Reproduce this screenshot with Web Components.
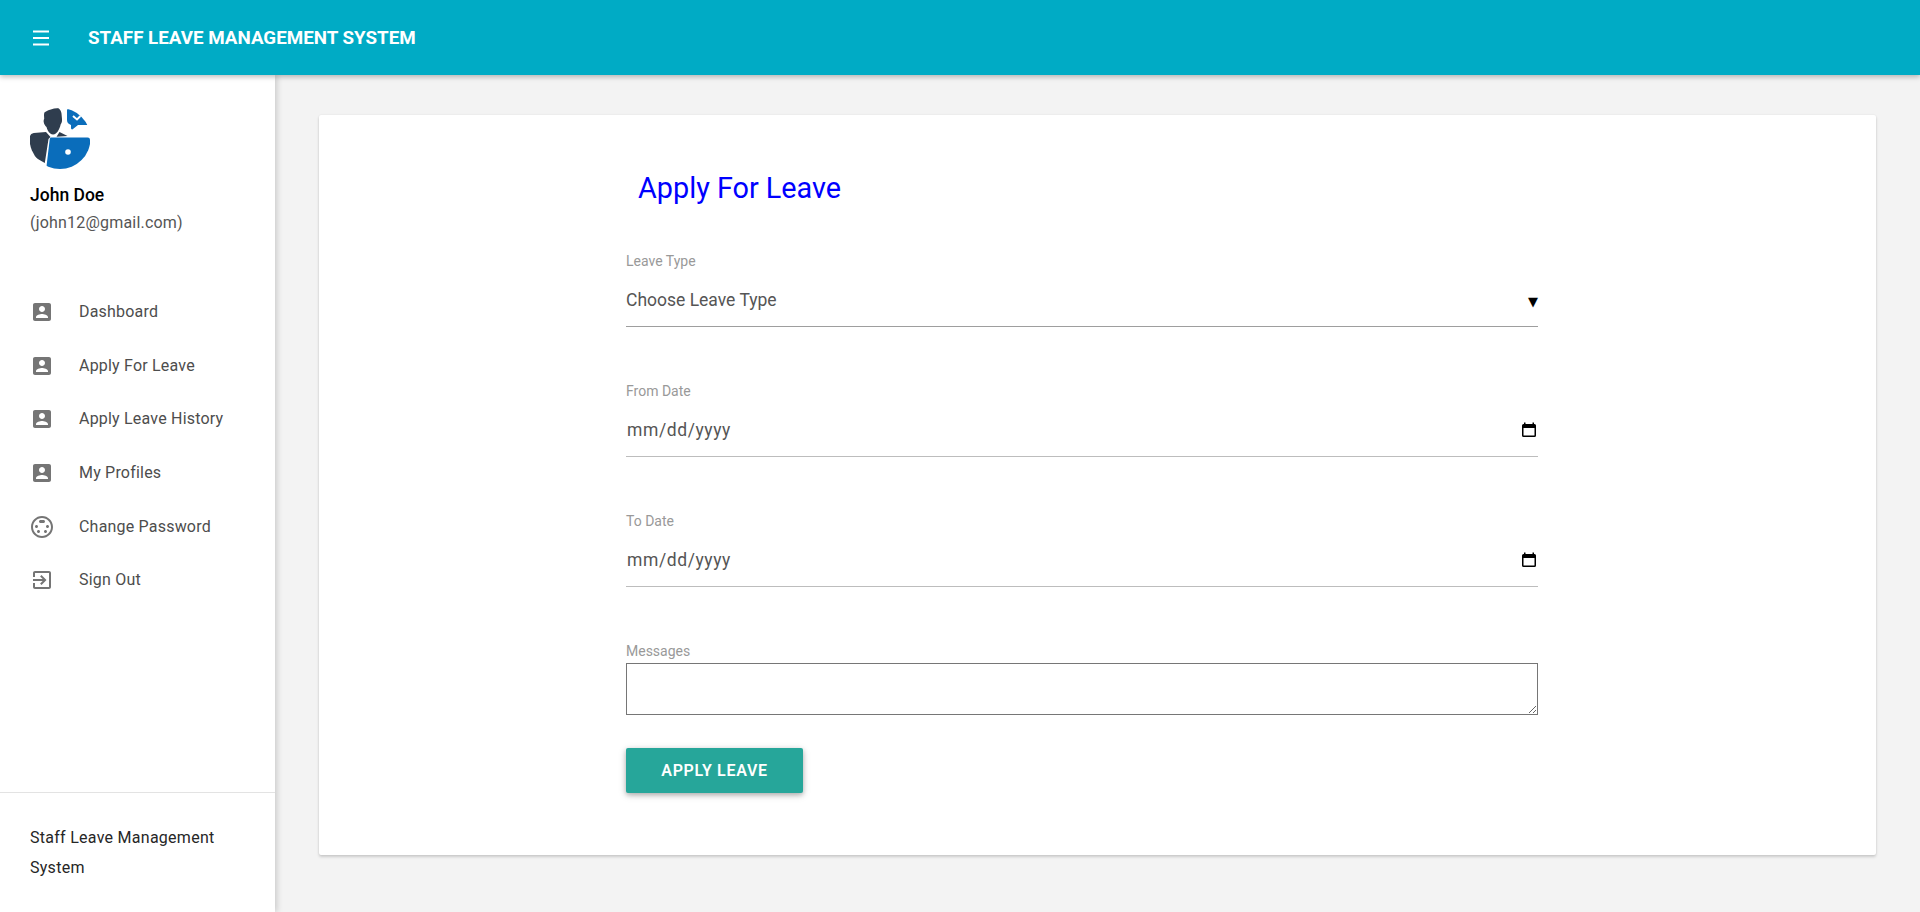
<!DOCTYPE html>
<html lang="en"><head><meta charset="utf-8"><title>Staff Leave Management System</title>
<style>
html,body{margin:0;padding:0;height:912px;overflow:hidden;background:#f3f3f3;font-family:Roboto,"Liberation Sans",sans-serif}
</style></head>
<body>
<slm-app>
  <slm-header slot="header">STAFF LEAVE MANAGEMENT SYSTEM</slm-header>
  <slm-sidebar slot="sidebar">
    <slm-nav-item icon="box">Dashboard</slm-nav-item>
    <slm-nav-item icon="box">Apply For Leave</slm-nav-item>
    <slm-nav-item icon="box">Apply Leave History</slm-nav-item>
    <slm-nav-item icon="box">My Profiles</slm-nav-item>
    <slm-nav-item icon="svideo">Change Password</slm-nav-item>
    <slm-nav-item icon="exit">Sign Out</slm-nav-item>
  </slm-sidebar>
  <slm-card>
    <slm-leave-form></slm-leave-form>
  </slm-card>
</slm-app>
<script>
const def=(name,html,extra)=>{customElements.define(name,class extends HTMLElement{
  constructor(){super();this.attachShadow({mode:'open'}).innerHTML=typeof html==='function'?html(this):html;}
  connectedCallback(){if(extra)extra(this);}
});};
const ICONS={
 box:'M3 5v14c0 1.1.89 2 2 2h14c1.1 0 2-.9 2-2V5c0-1.1-.9-2-2-2H5c-1.11 0-2 .9-2 2zm12 4c0 1.66-1.34 3-3 3s-3-1.34-3-3 1.34-3 3-3 3 1.34 3 3zm-9 8c0-2 4-3.1 6-3.1s6 1.1 6 3.1v1H6v-1z',
 svideo:'M8 11.5c0-.83-.67-1.5-1.5-1.5S5 10.67 5 11.5 5.67 13 6.5 13 8 12.33 8 11.5zm7-5c0-.83-.67-1.5-1.5-1.5h-3C9.67 5 9 5.67 9 6.5S9.67 8 10.5 8h3c.83 0 1.5-.67 1.5-1.5zM8.5 15c-.83 0-1.5.67-1.5 1.5S7.67 18 8.5 18s1.5-.67 1.5-1.5S9.33 15 8.5 15zM12 1C5.93 1 1 5.93 1 12s4.93 11 11 11 11-4.93 11-11S18.07 1 12 1zm0 20c-4.96 0-9-4.04-9-9s4.04-9 9-9 9 4.04 9 9-4.04 9-9 9zm5.5-11c-.83 0-1.5.67-1.5 1.5s.67 1.5 1.5 1.5 1.5-.67 1.5-1.5-.67-1.5-1.5-1.5zm-2 5c-.83 0-1.5.67-1.5 1.5s.67 1.5 1.5 1.5 1.5-.67 1.5-1.5-.67-1.5-1.5-1.5z',
 exit:'M10.09 15.59L11.5 17l5-5-5-5-1.41 1.41L12.67 11H3v2h9.67l-2.58 2.59zM19 3H5c-1.11 0-2 .9-2 2v4h2V5h14v14H5v-4H3v4c0 1.1.89 2 2 2h14c1.1 0 2-.9 2-2V5c0-1.1-.9-2-2-2z'
};
def('slm-app',`<style>
:host{display:grid;grid-template-columns:275px 1fr;grid-template-rows:75px 837px;width:1920px;height:912px;background:#f3f3f3}
::slotted([slot=header]){grid-column:1/3;z-index:3}
::slotted([slot=sidebar]){z-index:2}
main{padding:40px 44px;box-sizing:border-box;min-width:0}
</style><slot name="header"></slot><slot name="sidebar"></slot><main><slot></slot></main>`);
def('slm-header',`<style>
:host{display:flex;align-items:center;background:#00abc5;color:#fff;box-shadow:0 2px 5px rgba(0,0,0,.26);font:700 18.8px/24px Roboto,sans-serif;padding:0 0 0 33px;box-sizing:border-box;height:75px}
svg{display:block;margin-right:39px}
span{padding-top:1px}
</style><svg width="16" height="16" viewBox="0 0 16 16" fill="#fff"><rect y="0.5" width="16" height="2"/><rect y="7" width="16" height="2"/><rect y="13.5" width="16" height="2"/></svg><span><slot></slot></span>`);
def('slm-sidebar',`<style>
:host{display:flex;flex-direction:column;background:#fff;box-shadow:2px 0 6px rgba(0,0,0,.17);height:837px;box-sizing:border-box;color:#333}
.user{padding:30px 30px 0;height:210.500px;box-sizing:border-box;flex:none}
svg{display:block;margin-bottom:13px}
.name{font:500 17.5px/24px Roboto,sans-serif;color:#000}
.mail{font:400 16px/30px Roboto,sans-serif;color:#555;letter-spacing:.2px;margin-top:1px}
nav{flex:1;display:flex;flex-direction:column}
footer{flex:none;height:120px;border-top:1px solid #e3e3e3;box-sizing:border-box;padding:30px 30px 0;font:400 16px/30px Roboto,sans-serif;color:#262626;letter-spacing:.27px}
</style>
<div class="user">
<svg width="60" height="65" viewBox="31 105 60 65">
<defs><clipPath id="c"><circle cx="61" cy="138.500" r="30.500"/></clipPath></defs>
<g clip-path="url(#c)">
<path fill="#2f3d4e" d="M45 115c0-5.500 4.500-8.500 9-8.500 4 0 8 2.500 8.500 7l.5 5.500c.2 2-.2 4-1.200 5-.8 3.500-2.300 7.500-5 9.500-1.500 1.200-4 1.200-5.500 0-2-1.700-3-3.500-3.800-6.500-1-1-2.500-2.500-2.800-5-.2-1.500 0-2.500.5-3z"/>
<path fill="#2f3d4e" d="M47 132l4.500 5-2 2-3.700 24-7-4c-4-2-7-5-8-9v-12c0-3 1.500-4.500 4-5z"/>
<path fill="#2f3d4e" d="M60.500 132l8 4-11 .8z"/>
<path fill="#0a6dbb" d="M52 137.500h36.500c2 0 2.500 1 2.500 3v30H47l3.500-29.500c.3-2 .5-3.500 1.500-3.500z"/>
<circle cx="69" cy="152" r="2.800" fill="#fff"/>
<path fill="#0a6dbb" d="M69 109h6c5 1 14 8 16 15v1H79l-5 4c-1 1-2 0-2-1v-3c-3-1-4-3-4-5v-9c0-1 0-2 1-2z"/>
<path fill="none" stroke="#fff" stroke-width="2" d="M74 116l4 3.500 5-5"/>
</g></svg>
<div class="name">John Doe</div>
<div class="mail">(john12@gmail.com)</div>
</div>
<nav><slot></slot></nav>
<footer>Staff Leave Management<br>System</footer>`);
def('slm-nav-item',el=>`<style>
:host{display:flex;align-items:center;height:53.600px;padding-left:30px;font:400 16px/24px Roboto,sans-serif;color:#4d4d4d;letter-spacing:.2px}
svg{display:block;margin-right:25px;flex:none}
</style><svg width="24" height="24" viewBox="0 0 24 24" fill="#757575"><path d="${ICONS[el.getAttribute('icon')]}"/></svg><slot></slot>`);
def('slm-card',`<style>
:host{display:block;background:#fff;border-radius:2px;box-shadow:0 2px 3px rgba(0,0,0,.16),0 0 2px rgba(0,0,0,.08);height:740px;box-sizing:border-box;padding:0 0 0 307px}
</style><slot></slot>`);
def('slm-field',el=>`<style>
:host{display:block;height:130px;box-sizing:border-box}
label{display:block;font:400 14px/16px Roboto,sans-serif;color:#999;margin-bottom:4px}
.box{display:flex;align-items:center;height:54px;box-sizing:border-box;border-bottom:1px solid ${el.getAttribute('line')||'#bdbdbd'};font:400 17.500px/24px Roboto,sans-serif;color:#555}
</style><label>${el.getAttribute('label')}</label><div class="box"><slot></slot></div>`);
const CAL='<svg width="20" height="20" viewBox="0 0 20 20" style="flex:none;display:block;margin-right:-1px"><path fill="#000" d="M5 2.500h1.500V4h7V2.500H15V4h.5A1.500 1.500 0 0 1 17 5.500v10a1.500 1.500 0 0 1-1.500 1.500h-11A1.500 1.500 0 0 1 3 15.500v-10A1.500 1.500 0 0 1 4.500 4H5zM4.500 8v7.500h11V8z"/></svg>';
def('slm-leave-form',`<style>
:host{display:block;width:912px;font-family:Roboto,sans-serif}
h1{font:400 28.800px/36px Roboto,sans-serif;color:#00f;margin:0;padding:55px 0 0 12px;height:138px;box-sizing:border-box}
.sp{flex:1}
.d{padding-left:1px;letter-spacing:.6px}
.arrow{font:400 13px/16px "DejaVu Sans",sans-serif;color:#000;margin-right:0;padding-top:5px}
.msg{display:block}
label{display:block;font:400 14px/16px Roboto,sans-serif;color:#999;margin-bottom:4px}
textarea{display:block;box-sizing:border-box;width:912px;height:52px;margin:0;padding:2px;border:1px solid #767676;background:#fff}
button{display:block;margin-top:33px;width:177px;height:45px;border:0;border-radius:2px;background:#26a69a;color:#fff;font:600 16px/45px Roboto,sans-serif;letter-spacing:.7px;text-transform:uppercase;padding:0;box-shadow:0 2px 5px rgba(0,0,0,.26),0 2px 10px rgba(0,0,0,.12)}
</style>
<h1>Apply For Leave</h1>
<slm-field label="Leave Type" line="#9e9e9e"><span>Choose Leave Type</span><span class="sp"></span><span class="arrow">▼</span></slm-field>
<slm-field label="From Date"><span class="d">mm/dd/yyyy</span><span class="sp"></span>${CAL}</slm-field>
<slm-field label="To Date"><span class="d">mm/dd/yyyy</span><span class="sp"></span>${CAL}</slm-field>
<div class="msg"><label>Messages</label><textarea aria-label="Messages"></textarea></div>
<button type="button">Apply Leave</button>`);
</script>
</body></html>
